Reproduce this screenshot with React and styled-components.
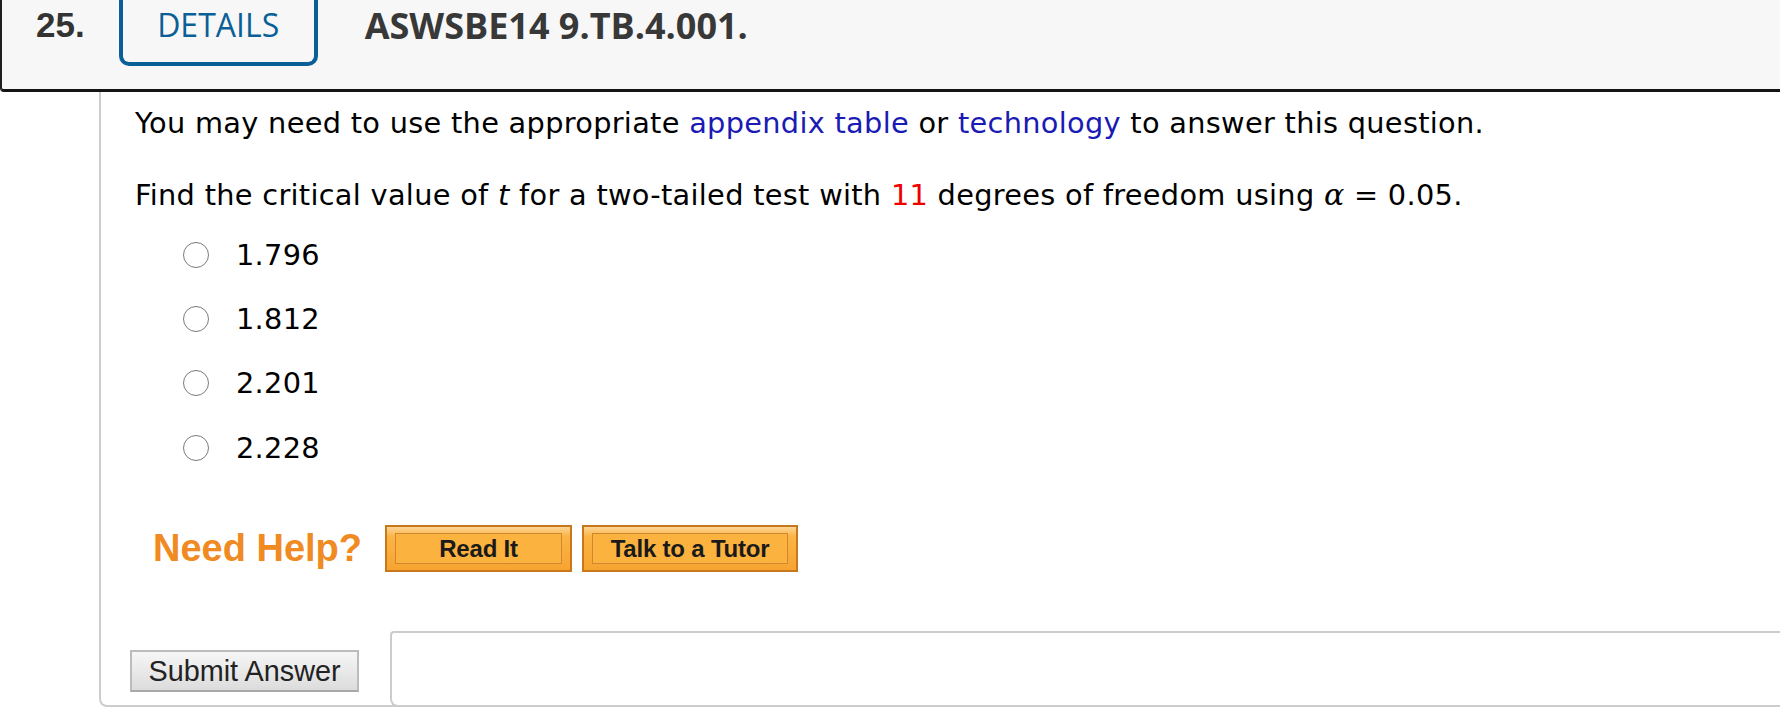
import React from 'react';
import styled, { createGlobalStyle } from 'styled-components';

const GlobalStyle = createGlobalStyle`
  html, body {
    margin: 0;
    padding: 0;
    background: #ffffff;
    overflow: hidden;
  }
  body {
    width: 1780px;
    height: 707px;
    font-family: "DejaVu Sans", Verdana, sans-serif;
  }
`;

const Page = styled.div`
  display: flex;
  flex-direction: column;
  width: 1780px;
  height: 707px;
`;

const Header = styled.div`
  display: flex;
  align-items: flex-start;
  height: 89px;
  padding-left: 34px;
  background: #f7f7f7;
  border-left: 2px solid #1e1e1e;
  border-bottom: 3px solid #141414;
  border-bottom-left-radius: 4px;
  flex-shrink: 0;
`;

const Number = styled.div`
  padding-top: 7px;
  font-family: "Liberation Sans", Arial, sans-serif;
  font-weight: bold;
  font-size: 35px;
  line-height: 1;
  color: #333333;
`;

const DetailsTab = styled.div`
  box-sizing: border-box;
  width: 199px;
  height: 66px;
  margin-left: 34px;
  padding-top: 9px;
  border: 4px solid #0b5f97;
  border-top: none;
  border-radius: 0 0 10px 10px;
  text-align: center;
  font-family: "Open Sans", sans-serif;
  font-size: 32px;
  line-height: 1;
  color: #0b5f97;
`;

const Title = styled.div`
  margin-left: 47px;
  padding-top: 8px;
  font-family: "Open Sans", sans-serif;
  font-weight: bold;
  font-size: 36px;
  line-height: 1;
  color: #383838;
`;

const Body = styled.div`
  display: flex;
  flex-direction: column;
  flex: 1;
  margin-left: 99px;
  padding-left: 29px;
  border-left: 2px solid #cccccc;
  border-bottom: 2px solid #cccccc;
  border-bottom-left-radius: 8px;
`;

const Para = styled.p`
  margin: ${p => p.$top}px 0 0 5px;
  font-size: 28.8px;
  line-height: 43.2px;
  letter-spacing: 0.3px;
  color: #000000;
  white-space: nowrap;
`;

const Link = styled.span`
  color: #1a1ab4;
`;

const Red = styled.span`
  color: #ee0000;
`;

const Var = styled.i`
  font-style: oblique;
`;

const Alpha = styled.i`
  font-family: "DejaVu Serif", "Liberation Serif", serif;
  font-size: 30px;
`;

const Options = styled.div`
  display: flex;
  flex-direction: column;
  gap: 21px;
  margin-top: 16px;
  padding-left: 53px;
`;

const Option = styled.label`
  display: flex;
  align-items: center;
  gap: 27px;
  height: 43.2px;
  font-size: 28.8px;
  letter-spacing: 0.3px;
  color: #000000;
`;

const Radio = styled.span`
  box-sizing: border-box;
  width: 26px;
  height: 26px;
  border-radius: 50%;
  border: 1.5px solid #7a7a7a;
  background: #ffffff;
  flex-shrink: 0;
`;

const HelpRow = styled.div`
  display: flex;
  align-items: center;
  margin-top: 56px;
  margin-left: 23px;
`;

const HelpLabel = styled.span`
  font-family: "Liberation Sans", Arial, sans-serif;
  font-weight: bold;
  font-size: 38px;
  color: #f08a22;
  margin-right: 23px;
`;

const HelpButton = styled.div`
  box-sizing: border-box;
  display: flex;
  width: ${p => p.$w}px;
  height: 47px;
  margin-right: 10px;
  padding: 6px 8px;
  border: 2px solid #c7781d;
  background: linear-gradient(to bottom, #fdd596 0%, #fbb446 22%, #f7a431 100%);
`;

const HelpInner = styled.span`
  flex: 1;
  display: flex;
  align-items: center;
  justify-content: center;
  border: 1.5px solid #cf8730;
  background: #fbb23f;
  font-family: "Liberation Sans", Arial, sans-serif;
  font-weight: bold;
  font-size: 24px;
  letter-spacing: -0.2px;
  color: #1a1a1a;
`;

const SubmitRow = styled.div`
  display: flex;
  align-items: flex-start;
  flex: 1;
  margin-top: 59px;
`;

const SubmitButton = styled.button`
  box-sizing: border-box;
  width: 229px;
  height: 42px;
  margin-top: 19px;
  padding: 0;
  border: 2px solid #bcbcbc;
  border-bottom-color: #a8a8a8;
  background: linear-gradient(to bottom, #f6f6f6, #dcdcdc);
  font-family: "Liberation Sans", Arial, sans-serif;
  font-size: 28.8px;
  color: #222222;
`;

const AnswerBox = styled.div`
  box-sizing: border-box;
  flex: 1;
  align-self: stretch;
  margin-left: 31px;
  margin-bottom: -2px;
  border: 2px solid #cccccc;
  border-right: none;
  border-radius: 4px 0 0 8px;
`;

const choices = ['1.796', '1.812', '2.201', '2.228'];

export default function App() {
  return (
    <>
      <GlobalStyle />
      <Page>
        <Header>
          <Number>25.</Number>
          <DetailsTab>DETAILS</DetailsTab>
          <Title>ASWSBE14 9.TB.4.001.</Title>
        </Header>
        <Body>
          <Para $top={10}>
            You may need to use the appropriate <Link>appendix table</Link> or{' '}
            <Link>technology</Link> to answer this question.
          </Para>
          <Para $top={28}>
            Find the critical value of <Var>t</Var> for a two-tailed test with <Red>11</Red>{' '}
            degrees of freedom using <Alpha>α</Alpha> = 0.05.
          </Para>
          <Options>
            {choices.map(c => (
              <Option key={c}>
                <Radio />
                {c}
              </Option>
            ))}
          </Options>
          <HelpRow>
            <HelpLabel>Need Help?</HelpLabel>
            <HelpButton $w={187}>
              <HelpInner>Read It</HelpInner>
            </HelpButton>
            <HelpButton $w={216}>
              <HelpInner>Talk to a Tutor</HelpInner>
            </HelpButton>
          </HelpRow>
          <SubmitRow>
            <SubmitButton>Submit Answer</SubmitButton>
            <AnswerBox />
          </SubmitRow>
        </Body>
      </Page>
    </>
  );
}
